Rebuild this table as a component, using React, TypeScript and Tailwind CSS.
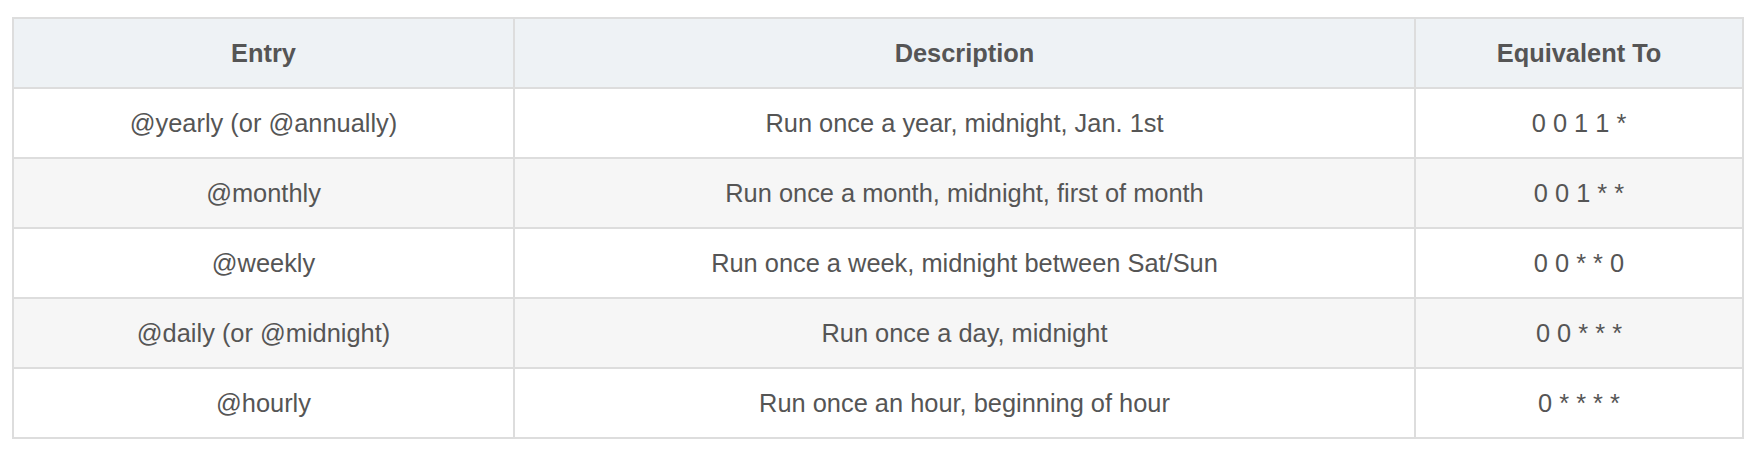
const rows = [
  { entry: '@yearly (or @annually)', desc: 'Run once a year, midnight, Jan. 1st', eq: '0 0 1 1 *' },
  { entry: '@monthly', desc: 'Run once a month, midnight, first of month', eq: '0 0 1 * *' },
  { entry: '@weekly', desc: 'Run once a week, midnight between Sat/Sun', eq: '0 0 * * 0' },
  { entry: '@daily (or @midnight)', desc: 'Run once a day, midnight', eq: '0 0 * * *' },
  { entry: '@hourly', desc: 'Run once an hour, beginning of hour', eq: '0 * * * *' },
];

export default function App() {
  return (
    <div className="min-h-screen bg-white px-3 pt-[17px] font-['Liberation_Sans',Arial,sans-serif] text-[25.4px] text-[#555555]">
      <table className="w-[1732px] border-separate border-spacing-0 border border-[#dddddd]">
        <thead>
          <tr className="bg-[#eef2f5]">
            <th className="w-[501px] border border-[#dddddd] p-0 font-bold">
              <div className="flex h-[68px] items-center justify-center">Entry</div>
            </th>
            <th className="w-[901px] border border-[#dddddd] p-0 font-bold">
              <div className="flex h-[68px] items-center justify-center">Description</div>
            </th>
            <th className="w-[328px] border border-[#dddddd] p-0 font-bold">
              <div className="flex h-[68px] items-center justify-center">Equivalent To</div>
            </th>
          </tr>
        </thead>
        <tbody>
          {rows.map((r, i) => (
            <tr key={r.entry} className={i % 2 === 1 ? 'bg-[#f6f6f6]' : 'bg-white'}>
              <td className="border border-[#dddddd] p-0">
                <div className="flex h-[68px] items-center justify-center pt-px">{r.entry}</div>
              </td>
              <td className="border border-[#dddddd] p-0">
                <div className="flex h-[68px] items-center justify-center pt-px">{r.desc}</div>
              </td>
              <td className="border border-[#dddddd] p-0">
                <div className="flex h-[68px] items-center justify-center whitespace-pre pt-px">{r.eq}</div>
              </td>
            </tr>
          ))}
        </tbody>
      </table>
    </div>
  );
}
